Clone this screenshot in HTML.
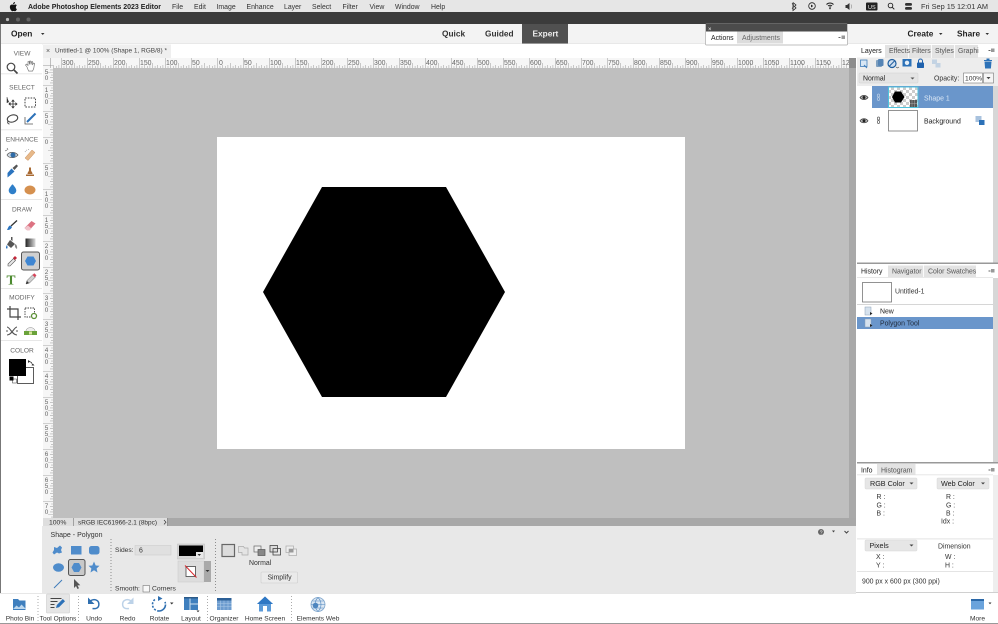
<!DOCTYPE html>
<html><head><meta charset="utf-8"><style>
html,body{margin:0;padding:0;background:#fff;overflow:hidden}
svg{display:block;filter:blur(.35px)}
text{font-family:"Liberation Sans",sans-serif;font-size:6.9px;fill:#333}
.b{font-weight:bold}
.m{text-anchor:middle}
.h{font-size:6.6px;fill:#666;text-anchor:middle}
.t{fill:#333;text-anchor:middle}
.r{font-size:6.9px;fill:#666}
.v{font-size:6.4px;fill:#666;text-anchor:middle}
</style></head><body>
<svg width="998" height="624" viewBox="0 0 998 624" xmlns="http://www.w3.org/2000/svg">
<defs>
<pattern id="hr" patternUnits="userSpaceOnUse" x="217" y="58" width="26" height="10"><rect width="26" height="10" fill="#f6f6f6"/><path d="M.5 0V10M3 8V10M5.7 7V10M8.3 8V10M10.9 7V10M13.5 5V10M16.1 8V10M18.7 7V10M21.3 8V10M23.9 7V10" stroke="#aaa" stroke-width=".6"/></pattern>
<pattern id="vr" patternUnits="userSpaceOnUse" x="43" y="137" width="10" height="26"><rect width="10" height="26" fill="#f6f6f6"/><path d="M0 .5H10M8 3H10M7 5.7H10M8 8.3H10M7 10.9H10M5 13.5H10M8 16.1H10M7 18.7H10M8 21.3H10M7 23.9H10" stroke="#aaa" stroke-width=".6"/></pattern>
<pattern id="ck" patternUnits="userSpaceOnUse" width="6" height="6"><rect width="6" height="6" fill="#fff"/><rect width="3" height="3" fill="#ccc"/><rect x="3" y="3" width="3" height="3" fill="#ccc"/></pattern>
<linearGradient id="gd"><stop offset="0" stop-color="#222"/><stop offset="1" stop-color="#ddd"/></linearGradient>
</defs>
<rect width="998" height="624" fill="#fff"/>

<!-- menu bar -->
<rect width="998" height="12" fill="#e6e6e6"/>
<path d="M13.800 3.400c.5-.6.8-1.100.7-1.700-.6.1-1.200.4-1.500.9-.3.4-.5 1-.4 1.500.5 0 .9-.3 1.200-.7zM15.500 6.500c0-.9.7-1.400.8-1.500-.5-.6-1.100-.8-1.500-.8-.7 0-1.100.4-1.600.4s-1-.4-1.600-.4c-.8 0-1.700.6-2 1.300-.6 1.500.1 3.500 1 4.500.4.500.8 1 1.300 1s.7-.3 1.300-.3.800.3 1.300.3.900-.5 1.300-1c.3-.4.500-.9.600-1.200-.7-.3-1.100-.9-1.100-1.300z" fill="#111" transform="translate(.5,.3)"/>
<text class="b" x="28" y="8.800" textLength="133" lengthAdjust="spacingAndGlyphs" style="fill:#222">Adobe Photoshop Elements 2023 Editor</text>
<text x="172" y="8.800">File</text><text x="194" y="8.800">Edit</text><text x="216.500" y="8.800">Image</text><text x="246.500" y="8.800">Enhance</text><text x="284" y="8.800">Layer</text><text x="312" y="8.800">Select</text><text x="342.500" y="8.800">Filter</text><text x="369.500" y="8.800">View</text><text x="395" y="8.800">Window</text><text x="431" y="8.800">Help</text>
<path d="M793 4l3 2.500-1.500 1.500 1.500 1.500-3 2.500V4M792 5l2 2M792 10l2-2" transform="translate(0,-1.500)" fill="none" stroke="#222" stroke-width=".8"/>
<circle cx="812" cy="6" r="3.300" fill="none" stroke="#222" stroke-width=".8"/><path d="M811 4.500l2.200 1.500-2.200 1.500z" fill="#222"/>
<path d="M826.500 4.500c2-2 5-2 7 0M828 6c1.200-1 3-1 4 0M829.300 7.300c.5-.4 1.200-.4 1.600 0" fill="none" stroke="#222" stroke-width="1"/><circle cx="830" cy="8.500" r=".8" fill="#222"/>
<path d="M845.500 5h1.500l2.500-2v7l-2.500-2h-1.500z" fill="#333"/><path d="M851 4.500c.7 1 .7 3 0 4" fill="none" stroke="#999" stroke-width=".7"/>
<rect x="866" y="2.500" width="11.500" height="8" rx="1" fill="#222"/><text x="868" y="8.800" style="font-size:5.500px;fill:#eee">US</text>
<circle cx="890.500" cy="5.500" r="2.300" fill="none" stroke="#222" stroke-width=".9"/><path d="M892.300 7.300l2 2" stroke="#222" stroke-width="1"/>
<rect x="905" y="3" width="7" height="2.800" rx="1.400" fill="#333"/><rect x="905" y="7" width="7" height="2.800" rx="1.400" fill="#333"/>
<text x="921" y="8.800" textLength="67" lengthAdjust="spacingAndGlyphs">Fri Sep 15  12:01 AM</text>

<!-- title bar -->
<rect y="12" width="998" height="12" fill="#3b3b3b"/>
<circle cx="7.500" cy="19.500" r="1.600" fill="#bbb"/><circle cx="18" cy="19.500" r="2" fill="#636363"/><circle cx="28.500" cy="19.500" r="2" fill="#636363"/>

<!-- top bar -->
<rect y="24" width="998" height="20" fill="#f3f3f3"/><rect y="43.500" width="998" height=".8" fill="#dedede"/>
<text class="b" x="11" y="36.300" style="font-size:8.400px;fill:#222">Open</text><path d="M41 33h3.500l-1.750 2z" fill="#333"/>
<text class="b" x="442" y="36.300" style="font-size:8.300px;fill:#333">Quick</text>
<text class="b" x="485" y="36.300" style="font-size:8.300px;fill:#333">Guided</text>
<rect x="522" y="24" width="46" height="19.500" fill="#505050"/>
<text class="b" x="532.500" y="36.300" style="font-size:8.300px;fill:#eee">Expert</text>
<text class="b" x="907.500" y="36.300" style="font-size:8.300px;fill:#222">Create</text><path d="M939 33h3.500l-1.750 2z" fill="#333"/>
<text class="b" x="957" y="36.300" style="font-size:8.300px;fill:#222">Share</text><path d="M985.500 33h3.500l-1.750 2z" fill="#333"/>

<!-- left edge -->
<rect x="0" y="24" width="1" height="600" fill="#777"/>

<!-- tab bar -->
<rect x="43" y="44" width="813" height="14" fill="#fff"/>
<rect x="43" y="44.500" width="128" height="13.500" fill="#efefef"/>
<text x="46" y="52.800" style="font-size:7px;fill:#555">×</text>
<text x="55" y="52.500" textLength="112" lengthAdjust="spacingAndGlyphs" style="font-size:6.800px;fill:#444">Untitled-1 @ 100% (Shape 1, RGB/8) *</text>

<!-- canvas area -->
<rect x="43" y="58" width="813" height="468" fill="#bfbfbf"/>
<rect x="53" y="58" width="796" height="10" fill="url(#hr)"/>
<rect x="43" y="58" width="10" height="460" fill="url(#vr)"/>
<rect x="43" y="58" width="10" height="10" fill="#f6f6f6"/><path d="M50.500 58v10M43 65.500h10" stroke="#999" stroke-width=".6"/>
<g>
<text class="r" x="62" y="64.800">300</text><text class="r" x="88" y="64.800">250</text><text class="r" x="114" y="64.800">200</text><text class="r" x="140" y="64.800">150</text><text class="r" x="166" y="64.800">100</text><text class="r" x="192" y="64.800">50</text><text class="r" x="219" y="64.800">0</text><text class="r" x="244" y="64.800">50</text><text class="r" x="270" y="64.800">100</text><text class="r" x="296" y="64.800">150</text><text class="r" x="322" y="64.800">200</text><text class="r" x="348" y="64.800">250</text><text class="r" x="374" y="64.800">300</text><text class="r" x="400" y="64.800">350</text><text class="r" x="426" y="64.800">400</text><text class="r" x="452" y="64.800">450</text><text class="r" x="478" y="64.800">500</text><text class="r" x="504" y="64.800">550</text><text class="r" x="530" y="64.800">600</text><text class="r" x="556" y="64.800">650</text><text class="r" x="582" y="64.800">700</text><text class="r" x="608" y="64.800">750</text><text class="r" x="634" y="64.800">800</text><text class="r" x="660" y="64.800">850</text><text class="r" x="686" y="64.800">900</text><text class="r" x="712" y="64.800">950</text><text class="r" x="738" y="64.800">1000</text><text class="r" x="764" y="64.800">1050</text><text class="r" x="790" y="64.800">1100</text><text class="r" x="816" y="64.800">1150</text><text class="r" x="842" y="64.800">12</text>
</g>
<g>
<text class="v"><tspan x="46.500" y="74">5</tspan><tspan x="46.500" y="80">0</tspan></text>
<text class="v"><tspan x="46.500" y="92">1</tspan><tspan x="46.500" y="98">0</tspan><tspan x="46.500" y="104">0</tspan></text>
<text class="v"><tspan x="46.500" y="118">5</tspan><tspan x="46.500" y="124">0</tspan></text>
<text class="v"><tspan x="46.500" y="144">0</tspan></text>
<text class="v"><tspan x="46.500" y="170">5</tspan><tspan x="46.500" y="176">0</tspan></text>
<text class="v"><tspan x="46.500" y="196">1</tspan><tspan x="46.500" y="202">0</tspan><tspan x="46.500" y="208">0</tspan></text>
<text class="v"><tspan x="46.500" y="222">1</tspan><tspan x="46.500" y="228">5</tspan><tspan x="46.500" y="234">0</tspan></text>
<text class="v"><tspan x="46.500" y="248">2</tspan><tspan x="46.500" y="254">0</tspan><tspan x="46.500" y="260">0</tspan></text>
<text class="v"><tspan x="46.500" y="274">2</tspan><tspan x="46.500" y="280">5</tspan><tspan x="46.500" y="286">0</tspan></text>
<text class="v"><tspan x="46.500" y="300">3</tspan><tspan x="46.500" y="306">0</tspan><tspan x="46.500" y="312">0</tspan></text>
<text class="v"><tspan x="46.500" y="326">3</tspan><tspan x="46.500" y="332">5</tspan><tspan x="46.500" y="338">0</tspan></text>
<text class="v"><tspan x="46.500" y="352">4</tspan><tspan x="46.500" y="358">0</tspan><tspan x="46.500" y="364">0</tspan></text>
<text class="v"><tspan x="46.500" y="378">4</tspan><tspan x="46.500" y="384">5</tspan><tspan x="46.500" y="390">0</tspan></text>
<text class="v"><tspan x="46.500" y="404">5</tspan><tspan x="46.500" y="410">0</tspan><tspan x="46.500" y="416">0</tspan></text>
<text class="v"><tspan x="46.500" y="430">5</tspan><tspan x="46.500" y="436">5</tspan><tspan x="46.500" y="442">0</tspan></text>
<text class="v"><tspan x="46.500" y="456">6</tspan><tspan x="46.500" y="462">0</tspan><tspan x="46.500" y="468">0</tspan></text>
<text class="v"><tspan x="46.500" y="482">6</tspan><tspan x="46.500" y="488">5</tspan><tspan x="46.500" y="494">0</tspan></text>
<text class="v"><tspan x="46.500" y="508">7</tspan><tspan x="46.500" y="514">0</tspan></text>
</g>
<rect x="217" y="137" width="468" height="312" fill="#fff"/>
<polygon points="322,187 446,187 505,292 446,397 322,397 263,292" fill="#000"/>
<rect x="849" y="58" width="7" height="460" fill="#a9a9a9"/><rect x="849" y="58" width="7" height="10" fill="#8d8d8d"/>

<!-- status bar -->
<rect x="43" y="518" width="813" height="8" fill="#a8a8a8"/>
<rect x="43" y="518" width="124" height="8" fill="#dedede"/><path d="M73.500 518v8M167.500 518v8" stroke="#888" stroke-width=".7"/>
<text x="49" y="524.500" style="font-size:6.800px">100%</text>
<text x="78" y="524.500" textLength="79" lengthAdjust="spacingAndGlyphs" style="font-size:6.800px">sRGB IEC61966-2.1 (8bpc)</text>
<path d="M164 520l2 2.200-2 2.200" fill="none" stroke="#333" stroke-width=".7"/>

<!-- options panel -->
<rect x="42" y="526" width="814" height="67" fill="#e8e8e8"/>
<text x="50.500" y="536.800" textLength="52" lengthAdjust="spacingAndGlyphs" style="font-size:7px">Shape - Polygon</text>
<g fill="#4f8ccb">
<path d="M54 547l3 1 3-2.500 2 2-1 2.500 1 2.500-3 1-2-1-3 2-1.500-2 1.500-2.500z"/>
<rect x="71" y="546" width="10.500" height="8.500"/>
<rect x="89" y="546" width="10.500" height="8.500" rx="2.500"/>
<ellipse cx="58.500" cy="567.500" rx="5.500" ry="4.300"/>
</g>
<rect x="68.500" y="559.500" width="16.500" height="16" rx="2" fill="#c9c9c9" stroke="#555" stroke-width="1"/>
<polygon points="71.500,567.500 74,563 79,563 81.500,567.500 79,572 74,572" fill="#4f8ccb"/>
<polygon points="94,561.500 95.700,565.500 99.500,565.800 96.600,568.500 97.500,572.500 94,570.300 90.500,572.500 91.400,568.500 88.500,565.800 92.300,565.500" fill="#4f8ccb"/>
<path d="M54 588l8-8" stroke="#3f7cba" stroke-width="1"/>
<path d="M74 579v9l2-2 1.500 3 1.500-.8-1.500-2.800 2.800-.2z" fill="#555"/>
<path d="M111 539v53M215.500 539v53" stroke="#777" stroke-width=".8" stroke-dasharray="1 2"/>
<text x="115" y="551.800" style="font-size:6.700px">Sides:</text>
<rect x="135" y="545.500" width="36" height="9.500" fill="#e0e0e0" stroke="#ccc" stroke-width=".6"/>
<text x="139" y="552.500">6</text>
<rect x="177.500" y="544" width="27" height="15" fill="#d6d6d6" stroke="#bbb" stroke-width=".5"/>
<rect x="179" y="545.500" width="24" height="10.500" fill="#000"/>
<rect x="196" y="552" width="7" height="6" fill="#e8e8e8"/><path d="M197.500 554h3.500l-1.750 2z" fill="#333"/>
<rect x="178" y="561" width="26" height="21" fill="#ddd" stroke="#ccc" stroke-width=".6"/>
<rect x="204" y="561" width="7" height="21" fill="#a9a9a9"/><path d="M205.500 570h4l-2 2z" fill="#333"/>
<rect x="186" y="566.500" width="9.500" height="10" fill="#fff" stroke="#444" stroke-width=".8"/><path d="M185 565.500l11.500 12" stroke="#d8262c" stroke-width="1"/>
<rect x="222" y="544.500" width="12.500" height="12" fill="#dcdcdc" stroke="#666" stroke-width="1.200"/>
<path d="M238.500 546.500h5l1 1.500h3.500v7h-6v-2.500h-3.500z" fill="#e4e4e4" stroke="#aaa" stroke-width=".7"/>
<rect x="254" y="546" width="7" height="6" fill="#eee" stroke="#666" stroke-width=".7"/><rect x="258" y="549.500" width="7" height="6" fill="#888" stroke="#555" stroke-width=".7"/>
<rect x="270" y="545.500" width="7.500" height="6.500" fill="#ddd" stroke="#444" stroke-width=".8"/><rect x="273" y="548.500" width="7.500" height="6.500" fill="none" stroke="#444" stroke-width=".8"/>
<rect x="286" y="546" width="7.500" height="6.500" fill="#eee" stroke="#aaa" stroke-width=".7"/><rect x="289" y="549" width="7.500" height="6.500" fill="#eee" stroke="#aaa" stroke-width=".7"/><rect x="289" y="549" width="4.500" height="3.500" fill="#999"/>
<text x="249" y="565">Normal</text>
<rect x="261" y="572" width="36.500" height="11" rx="1" fill="#eaeaea" stroke="#ccc" stroke-width=".6"/>
<text x="279.500" y="579.500" class="m">Simplify</text>
<text x="115" y="590.500" style="font-size:6.700px">Smooth:</text>
<rect x="143" y="585.500" width="6.500" height="6.500" fill="#f8f8f8" stroke="#777" stroke-width=".6"/>
<text x="152" y="590.500" style="font-size:6.700px">Corners</text>
<circle cx="821" cy="532" r="3" fill="#666"/><text x="819.800" y="534.300" style="font-size:5px;fill:#eee">?</text>
<path d="M832 530.500h3l-1.500 2z" fill="#444"/><path d="M844.500 531l2 2 2-2" fill="none" stroke="#444"/>

<!-- left tools -->
<rect x="1" y="44" width="41" height="474" fill="#fff"/>
<rect x="1" y="73.500" width="41" height=".7" fill="#ddd"/><rect x="1" y="129.500" width="41" height=".7" fill="#ddd"/><rect x="1" y="199" width="41" height=".7" fill="#ddd"/><rect x="1" y="288" width="41" height=".7" fill="#ddd"/><rect x="1" y="340" width="41" height=".7" fill="#ddd"/>
<text class="h" x="22" y="55.500">VIEW</text><text class="h" x="22" y="89.500">SELECT</text><text class="h" x="22" y="141.500">ENHANCE</text><text class="h" x="22" y="211.500">DRAW</text><text class="h" x="22" y="299.500">MODIFY</text><text class="h" x="22" y="352.500">COLOR</text>
<circle cx="11" cy="67" r="3.800" fill="none" stroke="#444" stroke-width="1.200"/><path d="M14 70l3.500 3.500" stroke="#444" stroke-width="1.600"/>
<path d="M27 67l-1.500-2 1-1 1.500 1.500v-4l1 0 .5 3 .2-3.500h1l.3 3.500.7-3 1 .2-.2 3.300 1-2 1 .3-.7 5-1.200 2.800h-4z" fill="#fff" stroke="#666" stroke-width=".6"/>
<path d="M7 97v6l1.500-1.500 1 2" fill="#333" stroke="#333" stroke-width=".5"/><path d="M13 100v8M9 104h8M13 100l-1 1.200h2zM13 108l-1-1.200h2zM9 104l1.200-1v2zM17 104l-1.200-1v2z" stroke="#333" stroke-width=".8" fill="#333"/>
<rect x="25" y="98" width="10.500" height="9" fill="none" stroke="#444" stroke-width="1" stroke-dasharray="1.600 1.200"/>
<ellipse cx="12.500" cy="118.500" rx="5.300" ry="3.500" fill="none" stroke="#444" stroke-width="1.100" transform="rotate(-15 12.500 118.500)"/><path d="M8 121c-1 1.500 0 3 1.500 3" fill="none" stroke="#444"/>
<path d="M25 117v7h8" fill="none" stroke="#555" stroke-width=".8"/><path d="M27 122l2.500-2.500 6-6" stroke="#2d72b8" stroke-width="2"/>
<path d="M7 155c2-3.500 8-3.500 11 0-3 3.500-9 3.500-11 0z" fill="#cfd8e0" stroke="#555" stroke-width=".7"/><circle cx="13" cy="155" r="2.500" fill="#2f6ca8"/><path d="M5 151l2-1M7 148l1 2" stroke="#555" stroke-width=".6"/>
<path d="M25 158l7-8 3 2.500-7 8z" fill="#e7b98a" stroke="#c98f5c" stroke-width=".5"/><path d="M25 152c1-2 3-3 5-2" fill="none" stroke="#999" stroke-width=".7" stroke-dasharray="1 1"/>
<path d="M7.500 176l4-4.500 3 3-4.500 4-2.500 2z" fill="#2b74bf" transform="translate(0,-3)"/><path d="M12.500 167l4-3.500 1.500 1.500-3.500 4z" fill="#555" transform="translate(0,1)"/>
<path d="M26 176v-1.500h8v1.500zM27.500 174c0-2 1.500-2.500 1.500-4v-2.500h2v2.500c0 1.500 1.500 2 1.500 4z" fill="#a86a33"/>
<path d="M12.500 184c-2.500 3.200-3.800 4.800-3.800 6.500a3.800 3.800 0 0 0 7.600 0c0-1.700-1.300-3.300-3.800-6.500z" fill="#2f7fc9"/>
<ellipse cx="30" cy="190" rx="5.500" ry="4.500" fill="#d5904f"/>
<path d="M7 230c3 0 4-1 5-3l-2-1.500c-2 1-2 3-3 4.500z" fill="#2b74bf"/><path d="M11 226l6-5.500" stroke="#333" stroke-width="1.300"/>
<path d="M24.500 228l7-7 4 2.500-6 6.500h-3z" fill="#dc7281"/><path d="M24.500 228l2.500 2.500h2.500l2-2-3.500-3z" fill="#f0c4cc"/>
<path d="M10 240l5 4-4 4-4-3.500z" fill="#555"/><path d="M11 240v-3h1.500v4" fill="#555"/><path d="M7 245c-1 1.500-1.500 3-.5 3.500s1.500-1 .5-3.500z" fill="#2b74bf"/><path d="M15 244c1.500.5 2.500 2 2 5-1.500-1-2.500-2-2-5z" fill="#888"/>
<rect x="25.500" y="238.500" width="10" height="8.500" fill="url(#gd)"/>
<path d="M8 264l5.500-5.500 2 2-5.500 5.500h-2z" fill="#e6e6e6" stroke="#555" stroke-width=".6"/><path d="M13 258l2-2 2 2-2 2z" fill="#c4263a"/>
<rect x="21.500" y="252" width="18" height="18" rx="2" fill="#d0d0d0" stroke="#555" stroke-width="1"/>
<polygon points="25,261 27.500,256.500 33.500,256.500 36,261 33.500,265.500 27.500,265.500" fill="#3f86d2"/>
<text x="6.500" y="284.500" class="b" style="font-size:13.500px;font-family:'Liberation Serif',serif;fill:#4c8a2f">T</text>
<path d="M26 284l1-3.500 6-6 2.500 2.500-6 6z" fill="#d1d1d1" stroke="#555" stroke-width=".5"/><path d="M32.500 275l1.800-1.800 2.200 2.200-1.800 1.800z" fill="#d6455a"/><path d="M26 284l1-3 2 2z" fill="#333"/>
<path d="M10 306v11h11M7 309h11v11" fill="none" stroke="#444" stroke-width="1.200"/>
<rect x="25" y="308" width="9.500" height="9" fill="none" stroke="#444" stroke-width=".9" stroke-dasharray="1.500 1"/><circle cx="34" cy="316" r="2.500" fill="#fff" stroke="#5c9136" stroke-width="1.300"/>
<path d="M7 327c3 0 5 8 10 8M17 327c-3 0-5 8-10 8" fill="none" stroke="#555" stroke-width="1.100"/><path d="M6 331h2M16 331h2" stroke="#555" stroke-width="1"/>
<rect x="24" y="331" width="13" height="4" fill="#6aa23a"/><path d="M26 331c0-4.500 9-4.500 9 0" fill="#eee" stroke="#888" stroke-width=".5"/><rect x="29" y="331.500" width="3" height="3" fill="#d8e6a0"/>
<rect x="17.500" y="367.500" width="16" height="16" fill="#fff" stroke="#333" stroke-width=".8"/>
<rect x="9" y="359" width="17" height="17" fill="#000"/>
<rect x="12.500" y="379" width="4" height="4" fill="#fff" stroke="#333" stroke-width=".5"/><rect x="9.500" y="376.500" width="4" height="4" fill="#000"/>
<path d="M28.500 361l3 1.500 1 2.500" fill="none" stroke="#333" stroke-width=".7"/><path d="M28 360v3l2-1.500zM31.500 365.500h3l-1.500-1.800z" fill="#333"/>

<!-- actions float -->
<rect x="705.500" y="24" width="142" height="21" rx="1" fill="#fff" stroke="#aaa" stroke-width=".7"/>
<rect x="706" y="24" width="141" height="7.500" fill="#4b4b4b"/>
<text x="708" y="30.800" style="font-size:6px;fill:#eee">×</text>
<rect x="737" y="31.500" width="46" height="12" fill="#dcdcdc"/>
<text x="711" y="40" style="fill:#222">Actions</text><text x="742" y="40" style="fill:#666">Adjustments</text>
<path d="M838.500 37.500h2" stroke="#666"/><rect x="841.500" y="35.500" width="3.500" height="3.500" fill="#999"/>

<!-- right panel -->
<rect x="856" y="44" width="142" height="549" fill="#fff"/>
<rect x="857" y="57" width="141" height="29" fill="#ededed"/>
<rect x="857" y="44.500" width="28" height="13" fill="#fff"/>
<rect x="885" y="45" width="93" height="13" fill="#e3e3e3"/>
<path d="M908.500 45v13M931.500 45v13M954.500 45v13" stroke="#fff" stroke-width=".8"/>
<text x="861" y="52.800" style="fill:#222">Layers</text><text x="889" y="52.800" style="fill:#555">Effects</text><text x="912" y="52.800" style="fill:#555">Filters</text><text x="935" y="52.800" style="fill:#555">Styles</text><text x="958" y="52.800" style="fill:#555">Graphi</text>
<path d="M988.500 50.500h2" stroke="#666"/><rect x="991" y="48.500" width="3.500" height="3.500" fill="#999"/>
<rect x="860.500" y="60" width="6.500" height="6.500" fill="#d8e6f4" stroke="#3f7cba" stroke-width=".8"/><path d="M864 65l3 3" stroke="#3f7cba"/>
<rect x="876" y="60" width="6" height="7" rx="1" fill="#7e9fbf"/><rect x="878" y="59" width="5.500" height="7" rx="1" fill="#5584b5"/>
<circle cx="892" cy="63.500" r="4" fill="#cfdff0" stroke="#1f5e9f" stroke-width="1.200"/><path d="M889 66.500l6-6" stroke="#1f5e9f"/><path d="M896 67l1.500 1 1.500-1" stroke="#555" fill="none" stroke-width=".7"/>
<rect x="902.500" y="59" width="9" height="7.500" fill="#2d72b8"/><circle cx="907" cy="62.800" r="2.200" fill="#e7f0f8"/>
<rect x="917" y="62.500" width="7" height="5.500" rx=".8" fill="#1f62ad"/><path d="M918.500 62.500v-1.500a2 2 0 0 1 4 0v1.500" fill="none" stroke="#1f62ad" stroke-width="1"/>
<rect x="932" y="59.500" width="5" height="4.500" fill="#c3d3e3"/><rect x="935.500" y="63" width="5" height="4.500" fill="#c3d3e3"/>
<path d="M984 60.500h8M985 62h6l-.5 6h-5z" fill="#2d72b8" stroke="#2d72b8" stroke-width=".9"/><rect x="986.500" y="58.500" width="3" height="1.500" fill="#2d72b8"/>
<rect x="859" y="73" width="59" height="10" rx="1" fill="#e4e4e4" stroke="#d0d0d0" stroke-width=".5"/><text x="863" y="80.500" style="fill:#222">Normal</text><path d="M910.500 77.500h4l-2 2z" fill="#555"/>
<text x="934" y="80.500" style="fill:#333">Opacity:</text>
<rect x="963.500" y="73" width="19" height="10" fill="#fff" stroke="#777" stroke-width=".6"/><text x="965" y="80.500" style="font-size:6.700px">100%</text>
<rect x="983.500" y="73" width="10" height="10" fill="#f5f5f5" stroke="#777" stroke-width=".6"/><path d="M986.500 77h4l-2 2.200z" fill="#444"/>
<rect x="857" y="86" width="136" height="46" fill="#fff"/>
<rect x="872" y="86" width="121" height="22" fill="#6a96cb"/>
<path d="M860 97.500c2-2.700 6-2.700 8 0-2 2.700-6 2.700-8 0z" fill="#bbb" stroke="#333" stroke-width=".7"/><circle cx="864" cy="97.500" r="1.500" fill="#222"/>
<path d="M860 120.800c2-2.700 6-2.700 8 0-2 2.700-6 2.700-8 0z" fill="#bbb" stroke="#333" stroke-width=".7"/><circle cx="864" cy="120.800" r="1.500" fill="#222"/>
<rect x="877.500" y="94" width="2" height="3" rx="1" fill="none" stroke="#bdd0e6" stroke-width=".7"/><rect x="877.500" y="97.500" width="2" height="3" rx="1" fill="none" stroke="#bdd0e6" stroke-width=".7"/>
<rect x="877.500" y="117" width="2" height="3" rx="1" fill="none" stroke="#555" stroke-width=".7"/><rect x="877.500" y="120.500" width="2" height="3" rx="1" fill="none" stroke="#555" stroke-width=".7"/>
<rect x="888.500" y="87" width="29.500" height="20.500" fill="url(#ck)" stroke="#4fc3dc" stroke-width="1"/>
<polygon points="892,97 895,91.500 901,91.500 904.500,97 901,102.500 895,102.500" fill="#000"/>
<rect x="910" y="100" width="7" height="7" fill="#555"/><path d="M912 100v7M914.500 100v7M910 103.500h7" stroke="#bbb" stroke-width=".4"/>
<text x="924" y="100.500" style="fill:#dce8f6">Shape 1</text>
<rect x="888.500" y="110.500" width="29" height="20.500" fill="#fff" stroke="#777" stroke-width=".8"/>
<text x="924" y="123.500" style="fill:#222">Background</text>
<rect x="975.500" y="116" width="6" height="6" fill="#a8c2de"/><rect x="979" y="120" width="5.500" height="5" fill="#2d72b8"/>
<rect x="993" y="86" width="5" height="177" fill="#d7d7d7"/>
<rect x="857" y="262.500" width="141" height="1.500" fill="#999"/>

<rect x="857" y="264" width="141" height="13" fill="#fff"/>
<rect x="888" y="265.500" width="88" height="11.500" fill="#e3e3e3"/><path d="M923.500 265.500v11.500" stroke="#fff" stroke-width=".8"/>
<text x="861" y="273.300" style="fill:#222">History</text><text x="892" y="273.300" style="fill:#555">Navigator</text><text x="928" y="273.300" style="fill:#555">Color Swatches</text>
<path d="M988.500 271h2" stroke="#666"/><rect x="991" y="269" width="3.500" height="3.500" fill="#999"/>
<rect x="857" y="277" width="136" height="1" fill="#e8e8e8"/>
<rect x="862.500" y="282.500" width="29" height="19.500" fill="#fff" stroke="#777" stroke-width=".8"/>
<text x="895" y="293.300" style="fill:#333">Untitled-1</text>
<rect x="857" y="304" width="136" height=".8" fill="#ccc"/>
<rect x="865" y="307" width="6" height="8" fill="#d6e2ee" stroke="#8aa0b8" stroke-width=".5"/><path d="M870 312l2.500 1.500-2.500 1.500z" fill="#222"/>
<text x="880" y="313.500" style="fill:#222">New</text>
<rect x="857" y="317" width="136" height="12" fill="#6a96cb"/>
<rect x="865" y="319" width="6" height="8" fill="#d6e2ee" stroke="#8aa0b8" stroke-width=".5"/><path d="M870 324l2.500 1.500-2.500 1.500z" fill="#222"/>
<text x="880" y="325.300" style="fill:#1f2a3a">Polygon Tool</text>
<rect x="993" y="278" width="5" height="184" fill="#d7d7d7"/>
<rect x="857" y="462" width="141" height="1.500" fill="#999"/>

<rect x="877" y="464" width="38.500" height="10.500" fill="#e3e3e3"/>
<text x="861" y="472.300" style="fill:#222">Info</text><text x="881" y="472.300" style="fill:#555">Histogram</text>
<path d="M988.500 470h2" stroke="#666"/><rect x="991" y="468" width="3.500" height="3.500" fill="#999"/>
<rect x="857" y="474.500" width="136" height=".7" fill="#ddd"/>
<rect x="865" y="478" width="52" height="11" rx="1" fill="#e6e6e6" stroke="#d8d8d8" stroke-width=".5"/><text x="870" y="485.800" style="font-size:7.200px;fill:#222">RGB Color</text><path d="M909.500 482.500h4l-2 2z" fill="#444"/>
<rect x="937" y="478" width="52" height="11" rx="1" fill="#e6e6e6" stroke="#d8d8d8" stroke-width=".5"/><text x="941" y="485.800" style="font-size:7.200px;fill:#222">Web Color</text><path d="M981 482.500h4l-2 2z" fill="#444"/>
<text x="876.500" y="499">R :</text><text x="876.500" y="507.500">G :</text><text x="876.500" y="515.500">B :</text>
<text x="946" y="499">R :</text><text x="946" y="507.500">G :</text><text x="946" y="515.500">B :</text><text x="941" y="523.500">Idx :</text>
<rect x="857" y="538.500" width="136" height=".8" fill="#ddd"/>
<rect x="865" y="540" width="52" height="11" rx="1" fill="#e6e6e6" stroke="#d8d8d8" stroke-width=".5"/><text x="869.500" y="548" style="font-size:7.200px;fill:#222">Pixels</text><path d="M909.500 544.500h4l-2 2z" fill="#444"/>
<text x="938" y="548.500">Dimension</text>
<text x="876" y="559">X :</text><text x="876" y="567.500">Y :</text><text x="945" y="559">W :</text><text x="945" y="567.500">H :</text>
<rect x="857" y="571" width="136" height=".8" fill="#ddd"/>
<text x="862" y="583.500">900 px x 600 px (300 ppi)</text>
<rect x="993" y="475" width="5" height="118" fill="#eee"/>
<rect x="856" y="592" width="142" height="1" fill="#d0d0d0"/>

<!-- bottom bar -->
<rect x="0" y="593" width="998" height="31" fill="#fff"/>
<rect x="0" y="593" width="856" height=".7" fill="#ddd"/>
<rect x="0" y="623" width="998" height="1" fill="#999"/>
<path d="M38 596v26M78.500 596v26M207.500 596v26M291.500 596v26" stroke="#888" stroke-width=".7" stroke-dasharray="1 2"/>
<path d="M13 599h5l1.500 1.500h6v9.500h-12.500z" fill="#3f7fbe"/><path d="M13 609l3.500-3.500 2.500 2 2.500-3 4.500 4.500z" fill="#bcd7ee"/>
<rect x="46.500" y="594" width="23" height="19" rx="1" fill="#e6e6e6" stroke="#ccc" stroke-width=".6"/>
<path d="M50.500 598.500h11M50.500 601.500h7M50.500 604.500h4M50.500 607.500h4" stroke="#444" stroke-width="1"/><path d="M56 608l.8-3 6-6 2.200 2.200-6 6z" fill="#2d72b8"/>
<path d="M89.500 602.500c1.500-3 5-3.500 7.500-2 2.500 1.500 2.500 6 0 7.500-1.500.8-3 .8-4.500.5" fill="none" stroke="#2f6fb0" stroke-width="1.500"/><path d="M88 597.500v6.500h6.500z" fill="#2f6fb0"/>
<path d="M132 602.500c-1.500-3-5-3.500-7.500-2-2.500 1.500-2.500 6 0 7.500 1.500.8 3 .8 4.500.5" fill="none" stroke="#bcd2e8" stroke-width="1.500"/><path d="M133.500 597.500v6.500h-6.500z" fill="#bcd2e8"/>
<circle cx="159" cy="604.500" r="6.500" fill="none" stroke="#2f6fb0" stroke-width="1.600" stroke-dasharray="12 1.500 2 1.500 2 1.500 2 1.500 2"/><path d="M158 596l4.500 2.500-4.500 2.500z" fill="#2f6fb0"/><path d="M170 602.500h3.500l-1.750 2z" fill="#333"/>
<rect x="184" y="597" width="14" height="13" fill="#3f7fbe"/><path d="M190 597v13M190 604h8" stroke="#cfe0f0" stroke-width="1"/><rect x="184" y="597" width="14" height="1.500" fill="#2b5a88"/><path d="M196.500 610.500h3l-1.500 1.800z" fill="#333"/>
<rect x="217" y="598" width="14.500" height="12" fill="#6d9ccf"/><rect x="217" y="598" width="14.500" height="2.500" fill="#2b5f96"/><path d="M220.500 600.500v9.500M224 600.500v9.500M228 600.500v9.500M217 603.500h14.500M217 606.500h14.500" stroke="#a9c7e6" stroke-width=".6"/>
<path d="M265 596.500l8 7.500h-2v7.500h-12v-7.500h-2z" fill="#5b9ad8"/><path d="M265 596.500l8 7.500h-16z" fill="#2f78c4"/><rect x="263" y="606" width="4" height="5.500" fill="#fff"/>
<circle cx="318" cy="604.500" r="7" fill="#dbe7f3" stroke="#7da4cb" stroke-width=".8"/><path d="M311 604.500h14M318 597.500c-4 4-4 10 0 14M318 597.500c4 4 4 10 0 14M312.500 601h11M312.500 608h11" fill="none" stroke="#4f86bf" stroke-width=".6"/><circle cx="315.500" cy="605.500" r="2.800" fill="#4f86bf"/>
<rect x="971" y="599" width="13" height="10.500" fill="#6aa3dc"/><rect x="971" y="599" width="13" height="2" fill="#2b68a8"/><path d="M988.500 602.500h3l-1.500 1.800z" fill="#333"/>
<text class="t" x="20" y="620.300" style="font-size:6.600px">Photo Bin</text><text class="t" x="58" y="620.300" style="font-size:6.600px">Tool Options</text><text class="t" x="94" y="620.300" style="font-size:6.600px">Undo</text><text class="t" x="127.500" y="620.300" style="font-size:6.600px">Redo</text><text class="t" x="159.500" y="620.300" style="font-size:6.600px">Rotate</text><text class="t" x="191" y="620.300" style="font-size:6.600px">Layout</text><text class="t" x="224" y="620.300" style="font-size:6.600px">Organizer</text><text class="t" x="265" y="620.300" style="font-size:6.600px">Home Screen</text><text class="t" x="318" y="620.300" style="font-size:6.600px">Elements Web</text><text class="t" x="977.500" y="620.300" style="font-size:6.600px">More</text>
</svg>
</body></html>
